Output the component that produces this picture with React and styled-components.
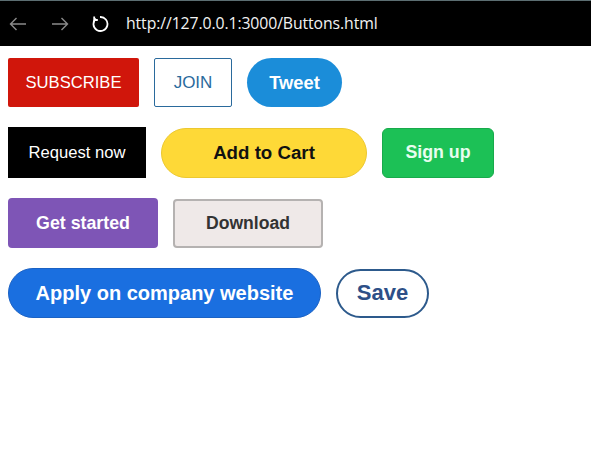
import React from 'react';
import styled, { createGlobalStyle } from 'styled-components';

const Global = createGlobalStyle`
  body {
    margin: 0;
    background: #ffffff;
    font-family: 'Liberation Sans', Arial, sans-serif;
  }
`;

const TopBar = styled.header`
  height: 45px;
  background: #000;
  border-top: 1px solid #5c6e72;
  display: flex;
  align-items: center;
  padding-left: 9px;
`;

const NavIcon = styled.span`
  display: flex;
  width: ${({ w }) => w}px;
  justify-content: flex-start;
  color: ${({ dim }) => (dim ? '#8a8a8a' : '#ffffff')};
`;

const Url = styled.span`
  color: #f2f2f2;
  font-family: 'Open Sans', 'Noto Sans', sans-serif;
  font-size: 15.8px;
  letter-spacing: -0.1px;
  margin-top: -2px;
`;

const Page = styled.main`
  display: flex;
  flex-direction: column;
  gap: 20px;
  padding: 12px 8px;
`;

const Row = styled.div`
  display: flex;
  align-items: center;
  gap: 15px;
`;

const Btn = styled.button`
  box-sizing: border-box;
  width: ${({ w }) => w}px;
  height: ${({ h }) => h || 50}px;
  background: ${({ bg }) => bg};
  color: ${({ fg }) => fg};
  border: ${({ bd }) => bd || 'none'};
  border-radius: ${({ r }) => r || 0}px;
  font-family: 'Liberation Sans', Arial, sans-serif;
  font-size: ${({ fs }) => fs}px;
  font-weight: ${({ bold }) => (bold ? 700 : 400)};
  padding: 0;
  display: flex;
  align-items: center;
  justify-content: center;
  cursor: pointer;
`;

const Back = () => (
  <svg width="18" height="14" viewBox="0 0 18 14" fill="none" stroke="currentColor" strokeWidth="1.4">
    <path d="M17 7H1.5M7.5 1L1.5 7l6 6" />
  </svg>
);

const Forward = () => (
  <svg width="18" height="14" viewBox="0 0 18 14" fill="none" stroke="currentColor" strokeWidth="1.4">
    <path d="M1 7h15.5M10.5 1l6 6-6 6" />
  </svg>
);

const Reload = () => (
  <svg width="18" height="18" viewBox="0 0 18 18" fill="none" stroke="currentColor" strokeWidth="1.8">
    <path d="M5 3.6A7 7 0 1 0 9 2" />
    <path d="M3.2 1.5v3.5h3.6" />
  </svg>
);

export default function App() {
  return (
    <>
      <Global />
      <TopBar>
        <NavIcon w={42} dim>
          <Back />
        </NavIcon>
        <NavIcon w={40} dim>
          <Forward />
        </NavIcon>
        <NavIcon w={35}>
          <Reload />
        </NavIcon>
        <Url>http://127.0.0.1:3000/Buttons.html</Url>
      </TopBar>
      <Page>
        <Row>
          <Btn w={131} h={49} bg="#d0160b" fg="#ffffff" r={2} fs={16.6}>SUBSCRIBE</Btn>
          <Btn w={78} h={49} bg="#ffffff" fg="#2a6a9c" bd="1px solid #2a6a9c" r={2} fs={17}>JOIN</Btn>
          <Btn w={95} h={49} bg="#1b8dd9" fg="#ffffff" r={25} fs={18.3} bold>Tweet</Btn>
        </Row>
        <Row>
          <Btn w={138} h={51} bg="#000000" fg="#ffffff" fs={16.6}>Request now</Btn>
          <Btn w={206} bg="#fed937" fg="#111111" bd="1px solid #ecc830" r={25} fs={18.7} bold>Add to Cart</Btn>
          <Btn w={112} bg="#1cc156" fg="#e8fdef" bd="1px solid #18aa4b" r={6} fs={17.8} bold>Sign up</Btn>
        </Row>
        <Row>
          <Btn w={150} bg="#7e55b6" fg="#ffffff" r={4} fs={17.8} bold>Get started</Btn>
          <Btn w={150} h={49} bg="#efe9e8" fg="#333333" bd="2px solid #b5b2b1" r={4} fs={17.6} bold>Download</Btn>
        </Row>
        <Row>
          <Btn w={313} bg="#1a6fe0" fg="#ffffff" bd="1px solid #1b62c4" r={25} fs={20} bold>Apply on company website</Btn>
          <Btn w={93} h={49} bg="#ffffff" fg="#2d4f87" bd="2px solid #2d5a8c" r={25} fs={22} bold>Save</Btn>
        </Row>
      </Page>
    </>
  );
}
